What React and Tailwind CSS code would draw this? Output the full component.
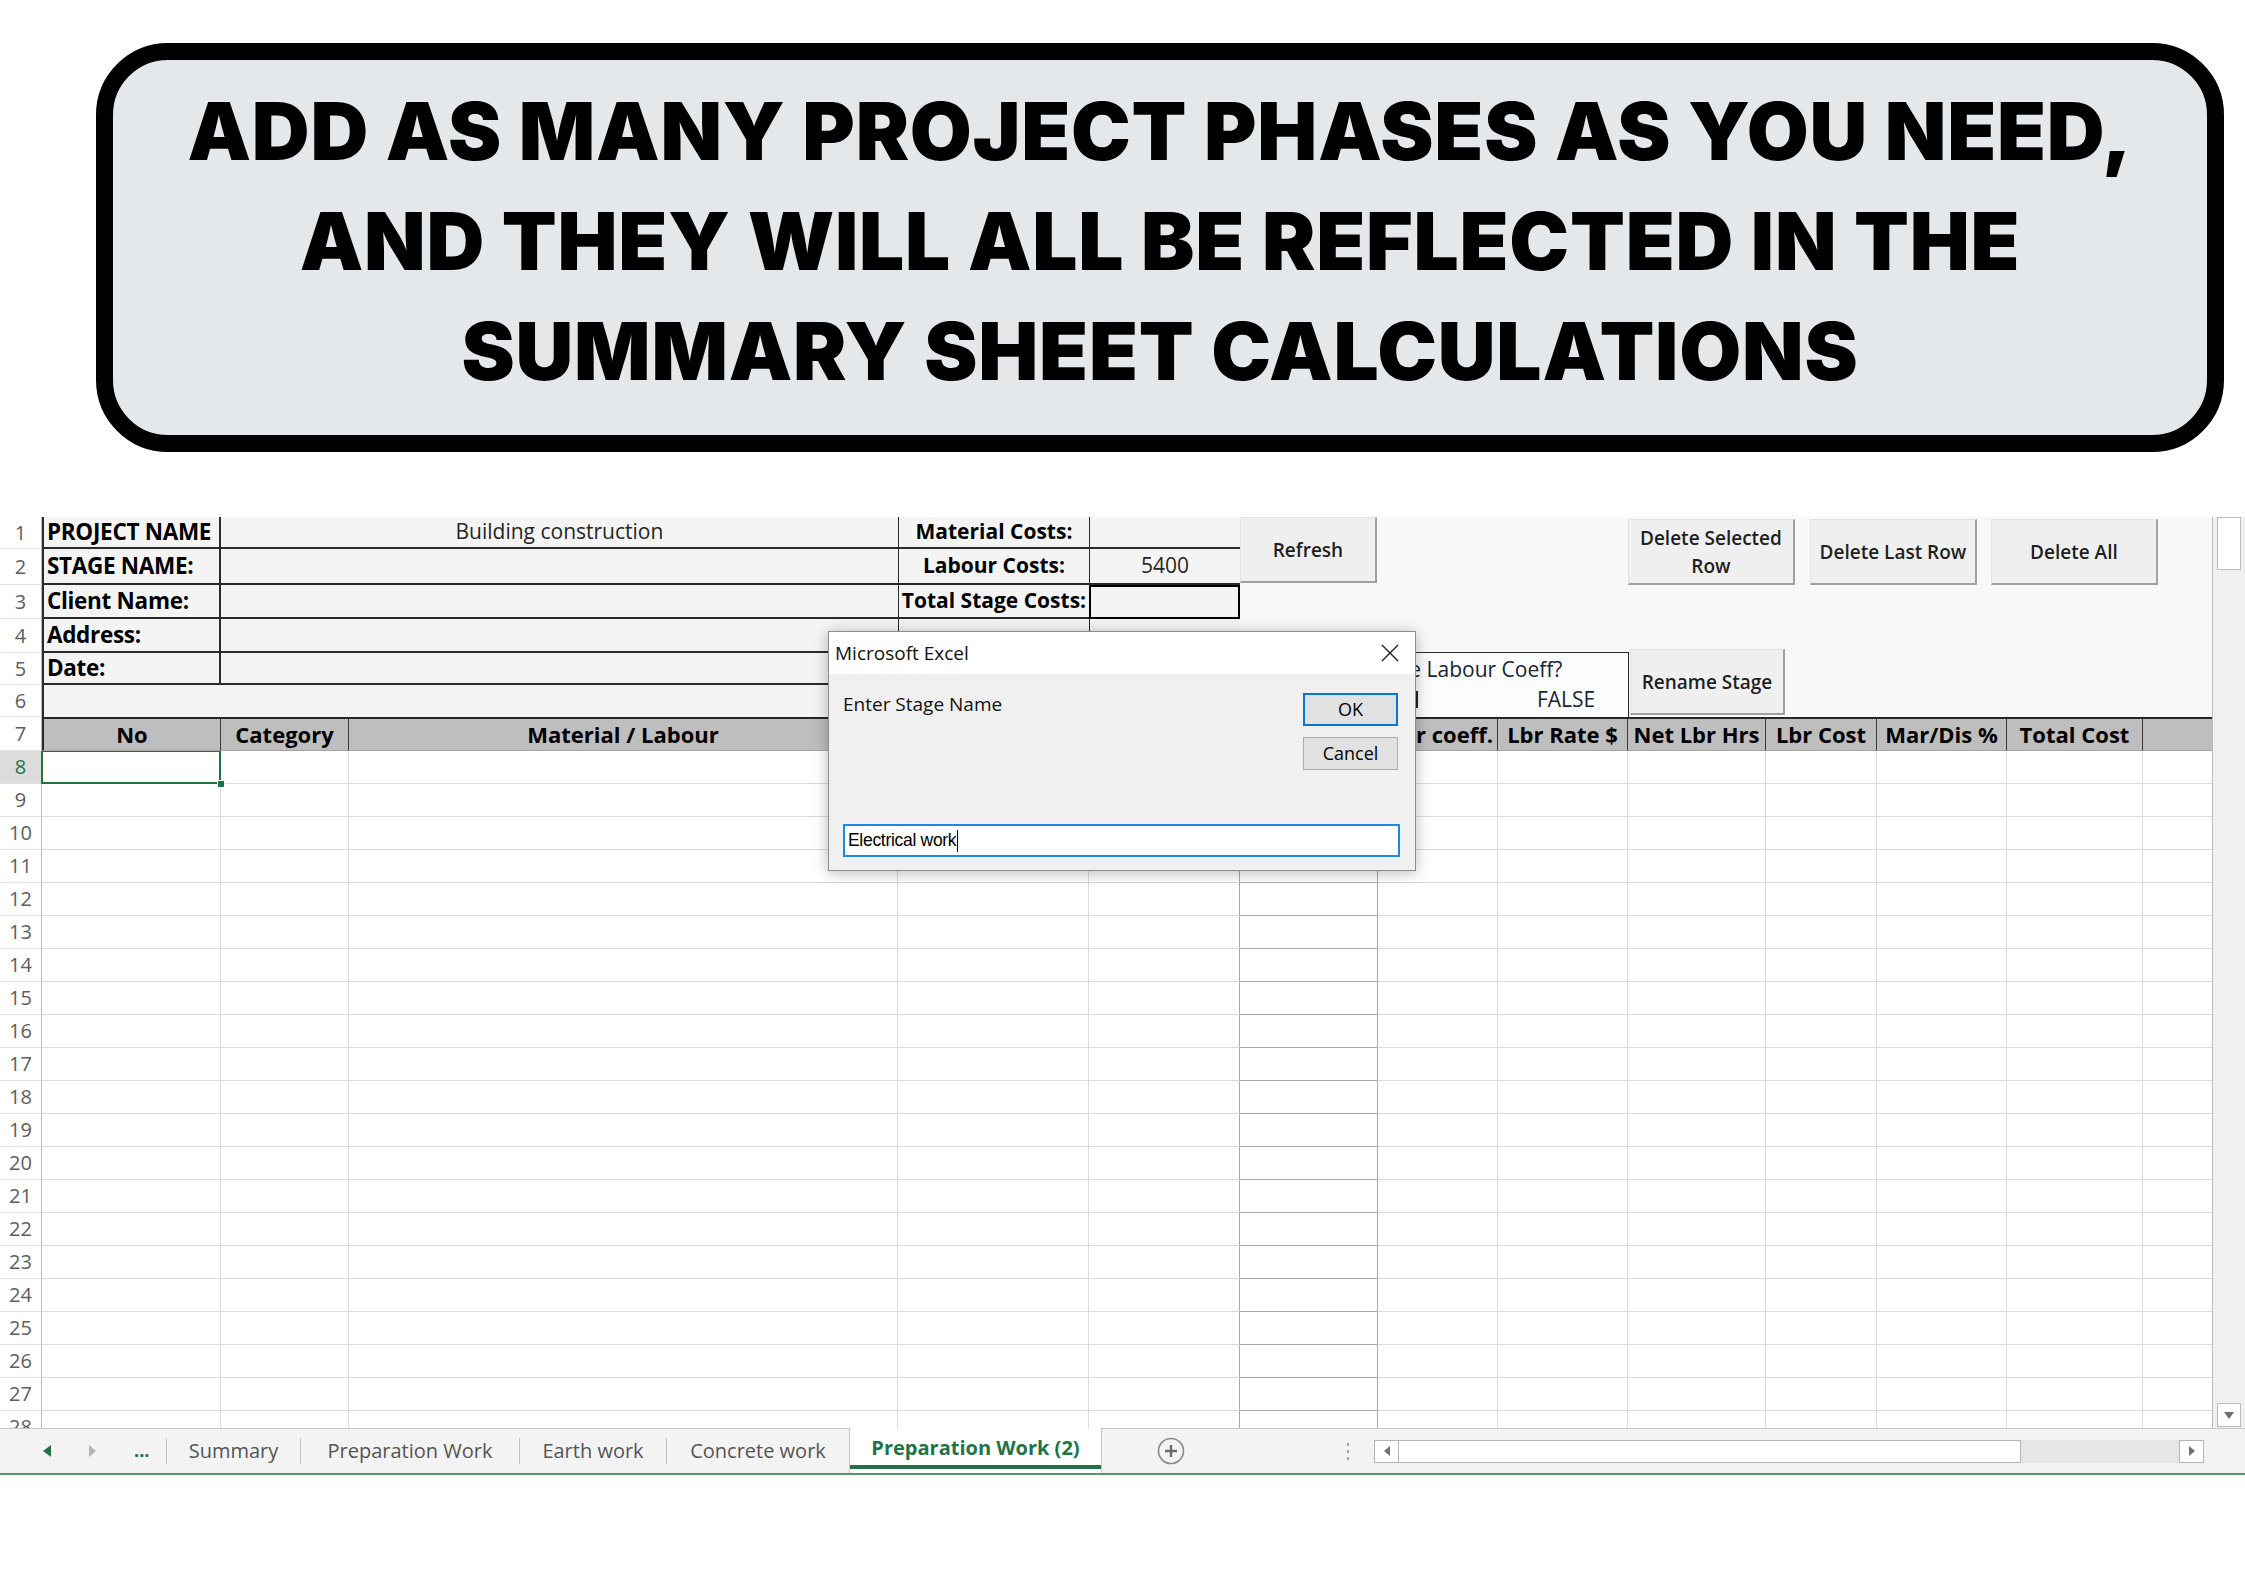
import React from 'react';

const GRID =
  'grid grid-cols-[42px_179px_128px_549px_191px_151px_138px_120px_130px_138px_111px_130px_136px_70px]';

const HEADERS = ['No', 'Category', 'Material / Labour', '', '', '', 'Labour coeff.', 'Lbr Rate $', 'Net Lbr Hrs', 'Lbr Cost', 'Mar/Dis %', 'Total Cost', ''];

const TOP_ROWS = [
  { n: 1, h: 'h-[32px]', label: 'PROJECT NAME', value: 'Building construction', cost: 'Material Costs:', amount: '' },
  { n: 2, h: 'h-[36px]', label: 'STAGE NAME:', value: '', cost: 'Labour Costs:', amount: '5400' },
  { n: 3, h: 'h-[34px]', label: 'Client Name:', value: '', cost: 'Total Stage Costs:', amount: '' },
  { n: 4, h: 'h-[34px]', label: 'Address:', value: '', cost: '', amount: '' },
  { n: 5, h: 'h-[32px]', label: 'Date:', value: '', cost: '', amount: '' },
];

const XlButton = ({ children, className = '' }) => (
  <div
    className={`flex items-center justify-center text-center bg-[#efefef] border-t border-l border-[#e2e2e2] border-r-2 border-b-2 border-r-[#a0a0a0] border-b-[#a0a0a0] text-[19px] font-semibold leading-[28px] text-[#1f1f1f] ${className}`}
  >
    {children}
  </div>
);

const RowNum = ({ n, className = '', active }) => (
  <div
    className={`flex items-center justify-center border-r border-r-[#bdbdbd] border-b border-b-[#e3e3e3] text-[20px] ${
      active ? 'bg-[#dcdcdc] text-[#217346]' : 'bg-white text-[#5e5e5e]'
    } ${className}`}
  >
    {n}
  </div>
);

const Banner = () => (
  <div className="pt-[43px] pl-[96px]">
    <div className="w-[2128px] h-[409px] border-[17px] border-black rounded-[72px] bg-[#e5e8eb] flex flex-col items-center justify-center font-['Inter',sans-serif] font-black text-black text-[80px] leading-[110px] tracking-[0.8px] pb-[14px]">
      <div>ADD AS MANY PROJECT PHASES AS YOU NEED,</div>
      <div>AND THEY WILL ALL BE REFLECTED IN THE</div>
      <div>SUMMARY SHEET CALCULATIONS</div>
    </div>
  </div>
);

const TopBlock = () => (
  <div className="flex h-[200px]">
    {/* row numbers 1-6 */}
    <div className="w-[42px] flex flex-col">
      {TOP_ROWS.map((r) => (
        <RowNum key={r.n} n={r.n} className={r.h} />
      ))}
      <RowNum n={6} className="h-[32px]" />
    </div>

    {/* columns A-E */}
    <div className="w-[1198px] grid grid-cols-[179px_128px_549px_191px_151px] grid-rows-[32px_36px_34px_34px_32px_32px] bg-[#f4f4f4] text-[21px] text-[#1a1a1a]">
      {TOP_ROWS.map((r) => (
        <React.Fragment key={r.n}>
          <div className="flex items-center pl-[3px] border-l-2 border-r-2 border-b-2 border-[#2a2a2a] font-bold text-black text-[22.5px] tracking-[-0.3px] whitespace-nowrap overflow-hidden">
            {r.label}
          </div>
          <div className="col-span-2 flex items-center justify-center border-b-2 border-[#2a2a2a] text-[#262626]">
            {r.value}
          </div>
          <div className="flex items-center justify-center border-l border-b-2 border-[#2a2a2a] font-bold text-black whitespace-nowrap">
            {r.cost}
          </div>
          <div
            className={`flex items-center justify-center text-[#262626] ${
              r.n === 3 ? 'border-2 border-black' : 'border-l border-b-2 border-[#2a2a2a]'
            }`}
          >
            {r.amount}
          </div>
        </React.Fragment>
      ))}
      <div className="col-span-3 border-l-2 border-[#2a2a2a]" />
      <div className="col-span-2 border-l border-[#2a2a2a]" />
    </div>

    {/* columns F-M: form controls */}
    <div className="w-[973px] bg-[#f8f8f8] flex flex-col">
      <div className="flex items-start h-[68px]">
        <XlButton className="w-[137px] h-[66px]">Refresh</XlButton>
        <XlButton className="ml-[251px] mt-[2px] w-[167px] h-[66px]">
          Delete Selected
          <br />
          Row
        </XlButton>
        <XlButton className="ml-[15px] mt-[2px] w-[167px] h-[66px]">Delete Last Row</XlButton>
        <XlButton className="ml-[14px] mt-[2px] w-[167px] h-[66px]">Delete All</XlButton>
      </div>
      <div className="flex items-start mt-[64px]">
        <div className="ml-[138px] mt-[3px] w-[251px] h-[65px] bg-[#fafcfe] border border-b-0 border-[#2a2a2a] flex flex-col text-[21px] text-[#1c2433] leading-[30px]">
          <div className="pl-[5px] pt-[1px] whitespace-nowrap">Use Labour Coeff?</div>
          <div className="flex items-center">
            <div className="ml-[23px] w-[16px] h-[17px] border-2 border-[#222] bg-white" />
            <div className="ml-[119px]">FALSE</div>
          </div>
        </div>
        <XlButton className="ml-px w-[155px] h-[66px]">Rename Stage</XlButton>
      </div>
    </div>
  </div>
);

const HeaderRow = () => (
  <div className={`${GRID} h-[34px]`}>
    <RowNum n={7} />
    {HEADERS.map((h, i) => (
      <div
        key={i}
        className={`flex items-center overflow-hidden whitespace-nowrap bg-[#bebebe] border-t-2 border-t-[#262626] border-r border-r-[#3a3a3a] border-b border-b-[#a5a5a5] text-[22px] font-bold text-black ${
          i === 6 ? 'justify-end pr-[4px]' : 'justify-center'
        } ${i === 0 ? 'border-l-2 border-l-[#262626]' : ''}`}
      >
        {h}
      </div>
    ))}
  </div>
);

const BodyRows = () => {
  const rows = [];
  for (let n = 8; n <= 28; n++) rows.push(n);
  return (
    <div className="h-[677px] overflow-hidden">
      {rows.map((n) => (
        <div key={n} className={`${GRID} h-[33px]`}>
          <RowNum n={n} active={n === 8} />
          {HEADERS.map((_, i) => (
            <div
              key={i}
              className={`relative bg-white border-b ${
                i === 5
                  ? 'border-r border-r-[#a9a9a9] border-b-[#a9a9a9]'
                  : i === 4
                  ? 'border-r border-r-[#a9a9a9] border-b-[#dadada]'
                  : 'border-r border-r-[#dadada] border-b-[#dadada]'
              } ${n === 8 && i === 0 ? 'z-10' : ''}`}
            >
              {n === 8 && i === 0 && (
                <>
                  <div className="absolute -top-px -left-px -right-px -bottom-px border-2 border-[#217346]" />
                  <div className="absolute -right-[5px] -bottom-[5px] w-[8px] h-[8px] bg-[#217346] border border-white" />
                </>
              )}
            </div>
          ))}
        </div>
      ))}
    </div>
  );
};

const VScroll = () => (
  <div className="w-[32px] h-[911px] bg-[#f0f0f0] flex flex-col justify-between items-center pb-px">
    <div className="w-[24px] h-[53px] bg-white border border-[#bdbdbd]" />
    <div className="w-[24px] h-[24px] bg-white border border-[#bdbdbd] flex items-center justify-center">
      <svg width="10" height="7" viewBox="0 0 10 7">
        <path d="M0 0 H10 L5 7 Z" fill="#6f6f6f" />
      </svg>
    </div>
  </div>
);

const Sep = () => <div className="w-px h-[26px] bg-[#c2c2c2]" />;

const TabBar = () => (
  <div>
    <div className="h-[45px] bg-[#f3f3f3] border-t border-[#c6c6c6] flex items-stretch font-['Open_Sans',sans-serif] text-[20px] text-[#555]">
      <div className="w-[166px] flex items-center">
        <svg className="ml-[43px]" width="8" height="12" viewBox="0 0 8 12">
          <path d="M8 0 V12 L0 6 Z" fill="#217346" />
        </svg>
        <svg className="ml-[38px]" width="7" height="12" viewBox="0 0 7 12">
          <path d="M0 0 V12 L7 6 Z" fill="#b5b5b5" />
        </svg>
        <span className="ml-[38px] text-[#217346] font-bold text-[18px] leading-none pb-[2px]">...</span>
      </div>
      <div className="flex items-center">
        <Sep />
      </div>
      <div className="w-[133px] flex items-center justify-center">Summary</div>
      <div className="flex items-center">
        <Sep />
      </div>
      <div className="w-[218px] flex items-center justify-center">Preparation Work</div>
      <div className="flex items-center">
        <Sep />
      </div>
      <div className="w-[146px] flex items-center justify-center">Earth work</div>
      <div className="flex items-center">
        <Sep />
      </div>
      <div className="w-[182px] flex items-center justify-center">Concrete work</div>
      <div className="w-[253px] -mt-px bg-white border-l border-r border-[#c6c6c6] flex flex-col">
        <div className="flex-1 flex items-center justify-center text-[#217346] font-bold pt-[2px]">
          Preparation Work (2)
        </div>
        <div className="h-[4px] bg-[#217346] mb-[4px]" />
      </div>
      <div className="ml-[55px] flex items-center">
        <svg width="28" height="28" viewBox="0 0 28 28">
          <circle cx="14" cy="14" r="12.5" fill="none" stroke="#8a8a8a" strokeWidth="1.6" />
          <path d="M14 8 V20 M8 14 H20" stroke="#6a6a6a" strokeWidth="2.4" />
        </svg>
      </div>
      <div className="ml-[162px] flex flex-col justify-center gap-[4px]">
        <div className="w-[2px] h-[3px] bg-[#a0a0a0]" />
        <div className="w-[2px] h-[3px] bg-[#a0a0a0]" />
        <div className="w-[2px] h-[3px] bg-[#a0a0a0]" />
      </div>
      <div className="ml-[25px] flex items-center">
        <div className="flex h-[23px] w-[830px]">
          <div className="w-[25px] bg-white border border-[#b5b5b5] flex items-center justify-center">
            <svg width="6" height="10" viewBox="0 0 6 10">
              <path d="M6 0 V10 L0 5 Z" fill="#707070" />
            </svg>
          </div>
          <div className="w-[622px] bg-white border-t border-b border-r border-[#b5b5b5]" />
          <div className="w-[158px] bg-[#e6e6e6]" />
          <div className="w-[25px] bg-white border border-[#b5b5b5] flex items-center justify-center">
            <svg width="6" height="10" viewBox="0 0 6 10">
              <path d="M0 0 V10 L6 5 Z" fill="#707070" />
            </svg>
          </div>
        </div>
      </div>
    </div>
    <div className="h-[2px] bg-[#4e9a6c]" />
  </div>
);

const Dialog = () => (
  <div className="absolute left-[828px] top-[631px] w-[588px] h-[240px] bg-[#f0f0f0] border border-[#8c8c8c] shadow-[0_2px_14px_rgba(0,0,0,0.28)] flex flex-col font-['Open_Sans',sans-serif] text-black">
    <div className="h-[42px] bg-white flex items-center justify-between pl-[6px] pr-[16px]">
      <span className="text-[19px] text-[#111]">Microsoft Excel</span>
      <svg width="18" height="18" viewBox="0 0 18 18">
        <path d="M1 1 L17 17 M17 1 L1 17" stroke="#222" strokeWidth="1.4" />
      </svg>
    </div>
    <div className="flex justify-between pt-[19px] pl-[14px] pr-[17px]">
      <span className="text-[19px] leading-[22px] text-[#111]">Enter Stage Name</span>
      <div className="flex flex-col gap-[11px]">
        <div className="w-[95px] h-[33px] bg-[#e1e1e1] border-2 border-[#0078d7] flex items-center justify-center text-[18px]">
          OK
        </div>
        <div className="w-[95px] h-[33px] bg-[#e1e1e1] border border-[#adadad] flex items-center justify-center text-[18px]">
          Cancel
        </div>
      </div>
    </div>
    <div className="mt-[54px] ml-[14px] mr-[15px] h-[33px] bg-white border-2 border-[#1e88e5] flex items-center pl-[3px] font-['Liberation_Sans',Arial,sans-serif] text-[17.5px] text-black tracking-[-0.3px]">
      Electrical work
      <span className="ml-px w-px h-[22px] bg-black" />
    </div>
  </div>
);

export default function App() {
  return (
    <div className="relative w-[2245px] h-[1587px] bg-white overflow-hidden font-['Open_Sans',sans-serif]">
      <Banner />
      <div className="mt-[65px] flex">
        <div className="w-[2213px] h-[911px] overflow-hidden border-r border-r-[#c0c0c0]">
          <TopBlock />
          <HeaderRow />
          <BodyRows />
        </div>
        <VScroll />
      </div>
      <TabBar />
      <Dialog />
    </div>
  );
}
